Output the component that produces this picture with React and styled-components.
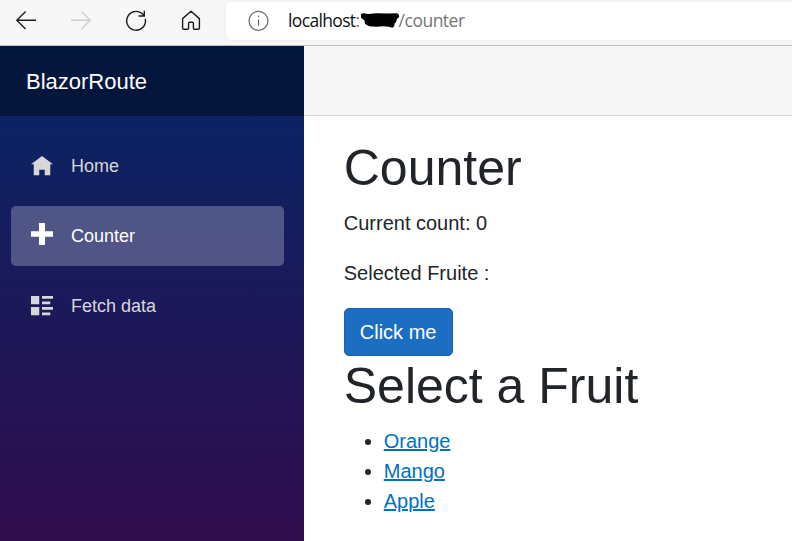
import React, { useState } from "react";
import styled, { createGlobalStyle } from "styled-components";

const GlobalStyle = createGlobalStyle`
  * { box-sizing: border-box; }
  html, body { margin: 0; padding: 0; overflow: hidden; background: #fff; }
  body {
    font-family: "Liberation Sans", Arial, sans-serif;
    font-size: 20px;
    line-height: 30px;
    color: #212529;
  }
`;

const Window = styled.div`
  display: flex;
  flex-direction: column;
  width: 100%;
  height: 100vh;
  overflow: hidden;
`;

const BrowserBar = styled.header`
  display: flex;
  align-items: flex-start;
  flex: none;
  height: 46px;
  background: #f7f7f7;
  border-bottom: 1px solid #bcbec0;
`;

const BrowserButtons = styled.div`
  display: flex;
  flex: none;
  width: 226px;
  padding: 8px 0 0 14px;
  gap: 31px;
`;

const ToolIcon = styled.svg`
  flex: none;
  width: 24px;
  height: 24px;
  fill: none;
  stroke: ${(p) => (p.$disabled ? "#cfcfcf" : "#1c1c1c")};
  stroke-width: 1.4;
`;

const AddressBar = styled.div`
  display: flex;
  align-items: center;
  flex: 1;
  height: 38px;
  margin-top: 2px;
  padding-left: 22px;
  background: #fff;
  border-radius: 5px 0 0 5px;
  box-shadow: 0 0 4px rgba(0, 0, 0, 0.07);
`;

const InfoIcon = styled.svg`
  width: 22px;
  height: 22px;
  fill: none;
  stroke: #6b6b6b;
  stroke-width: 1.2;
`;

const Url = styled.div`
  display: flex;
  align-items: center;
  margin: -2px 0 0 18px;
  font-family: "Open Sans", "Noto Sans", sans-serif;
  font-size: 17.5px;
  line-height: 24px;
  white-space: pre;
`;

const UrlPart = styled.span`
  color: ${(p) => (p.$muted ? "#767676" : "#111")};
  letter-spacing: ${(p) => (p.$muted ? "-0.5px" : "-0.65px")};
`;

const Scribble = styled.svg`
  width: 40px;
  height: 17px;
  margin: 1px -1px 0 0;
  fill: #000;
`;

const Page = styled.div`
  display: flex;
  flex: 1;
  min-height: 0;
`;

const Sidebar = styled.aside`
  flex: none;
  width: 304px;
  background: linear-gradient(180deg, rgb(5, 39, 103) 0, #3a0647 611px);
`;

const Brand = styled.div`
  display: flex;
  align-items: center;
  height: 70px;
  padding: 2px 0 0 26px;
  background: rgba(0, 0, 0, 0.4);
  color: #fff;
  font-size: 22px;
`;

const Nav = styled.nav`
  display: flex;
  flex-direction: column;
  gap: 10px;
  padding: 20px 20px 0 11px;
`;

const NavItem = styled.a`
  display: flex;
  align-items: center;
  height: 60px;
  padding-left: 20px;
  border-radius: 5px;
  font-size: 18px;
  text-decoration: none;
  color: ${(p) => (p.$active ? "#fff" : "#d7d7d7")};
  background: ${(p) => (p.$active ? "rgba(255, 255, 255, 0.25)" : "transparent")};
`;

const NavIcon = styled.svg`
  width: 22px;
  height: 22px;
  margin: ${(p) => (p.$raised ? "-4px" : "2px")} 18px 0 0;
  fill: currentColor;
`;

const Main = styled.main`
  flex: 1;
  min-width: 0;
`;

const TopRow = styled.div`
  height: 70px;
  background: #f7f7f7;
  border-bottom: 1px solid #d6d5d5;
`;

const Content = styled.section`
  padding: 22px 40px 0 39.75px;
`;

const Heading = styled.h1`
  margin: 0 0 10px;
  font-size: 50px;
  font-weight: 400;
  line-height: 60px;
`;

const Text = styled.p`
  margin: 0 0 20px;
`;

const PrimaryButton = styled.button`
  display: block;
  height: 48px;
  padding: 0 15.5px 0 15px;
  border: 1px solid #1861ac;
  border-radius: 5px;
  background: #1b6ec2;
  color: #fff;
  font: inherit;
`;

const FruitList = styled.ul`
  margin: 0;
  padding-left: 40px;
`;

const FruitLink = styled.a`
  color: #0071c1;
  text-decoration: underline;
  text-decoration-thickness: 2px;
`;

const navItems = [
  { label: "Home", d: "M4 0l-4 3h1v4h2v-2h2v2h2v-4.03l1 .03-4-3z" },
  { label: "Counter", active: true, d: "M2.9 0v3h-2.9v2h2.9v3h2.2v-3h2.9v-2h-2.9v-3h-2.2z" },
  {
    label: "Fetch data",
    d: "M0 0v3h3v-3h-3zm4 0v1h4v-1h-4zm0 2v1h3v-1h-3zm-4 2v3h3v-3h-3zm4 0v1h4v-1h-4zm0 2v1h3v-1h-3z",
  },
];

const fruits = ["Orange", "Mango", "Apple"];

export default function App() {
  const [count, setCount] = useState(0);
  const [fruit, setFruit] = useState("");

  return (
    <Window>
      <GlobalStyle />
      <BrowserBar>
        <BrowserButtons>
          <ToolIcon viewBox="0 0 24 24">
            <path d="M22 12.2H2.8M11.6 3.4L2.8 12.2l8.8 8.8" />
          </ToolIcon>
          <ToolIcon viewBox="0 0 24 24" $disabled>
            <path d="M2 12.2h19.2M12.4 3.4l8.8 8.8-8.8 8.8" />
          </ToolIcon>
          <ToolIcon viewBox="0 0 24 24">
            <path d="M21.3 10.8A9.4 9.4 0 1 1 17.8 5.3L20.3 8M20.3 2.8V8h-5.8" />
          </ToolIcon>
          <ToolIcon viewBox="0 0 24 24">
            <path d="M3.6 10.6L12 3.3l8.4 7.3V20q0 1.2-1.2 1.2h-3.8q-1 0-1-1v-5.1q0-.9-.9-.9h-3q-.9 0-.9.9v5.1q0 1-1 1H4.8q-1.2 0-1.2-1.2z" strokeLinejoin="round" />
          </ToolIcon>
        </BrowserButtons>
        <AddressBar>
          <InfoIcon viewBox="0 0 22 22">
            <circle cx="10.5" cy="10.8" r="9.5" />
            <path d="M10.5 9.2v6.6M10.5 5.6v1.6" />
          </InfoIcon>
          <Url>
            <UrlPart>localhost</UrlPart>
            <UrlPart $muted>:</UrlPart>
            <Scribble viewBox="0 0 39 16">
              <path d="M1 2L3 .9l5 .8 8-.7 12 .2 8-.2 2 1.4.2 2.2-2 1.8-1.2 3.4-1.4 1.3-.2 2.6-1.8 1.3-3.6-.8-5-.6-7 .5-7-.6L5 11.3 4.5 8 1 5.2z" />
            </Scribble>
            <UrlPart $muted>/counter</UrlPart>
          </Url>
        </AddressBar>
      </BrowserBar>
      <Page>
        <Sidebar>
          <Brand>BlazorRoute</Brand>
          <Nav>
            {navItems.map((item) => (
              <NavItem key={item.label} $active={item.active}>
                <NavIcon viewBox="0 0 8 8" $raised={item.active}>
                  <path d={item.d} />
                </NavIcon>
                {item.label}
              </NavItem>
            ))}
          </Nav>
        </Sidebar>
        <Main>
          <TopRow />
          <Content>
            <Heading>Counter</Heading>
            <Text>Current count: {count}</Text>
            <Text>Selected Fruite : {fruit}</Text>
            <PrimaryButton onClick={() => setCount(count + 1)}>Click me</PrimaryButton>
            <Heading>Select a Fruit</Heading>
            <FruitList>
              {fruits.map((name) => (
                <li key={name}>
                  <FruitLink href="#" onClick={() => setFruit(name)}>{name}</FruitLink>
                </li>
              ))}
            </FruitList>
          </Content>
        </Main>
      </Page>
    </Window>
  );
}
